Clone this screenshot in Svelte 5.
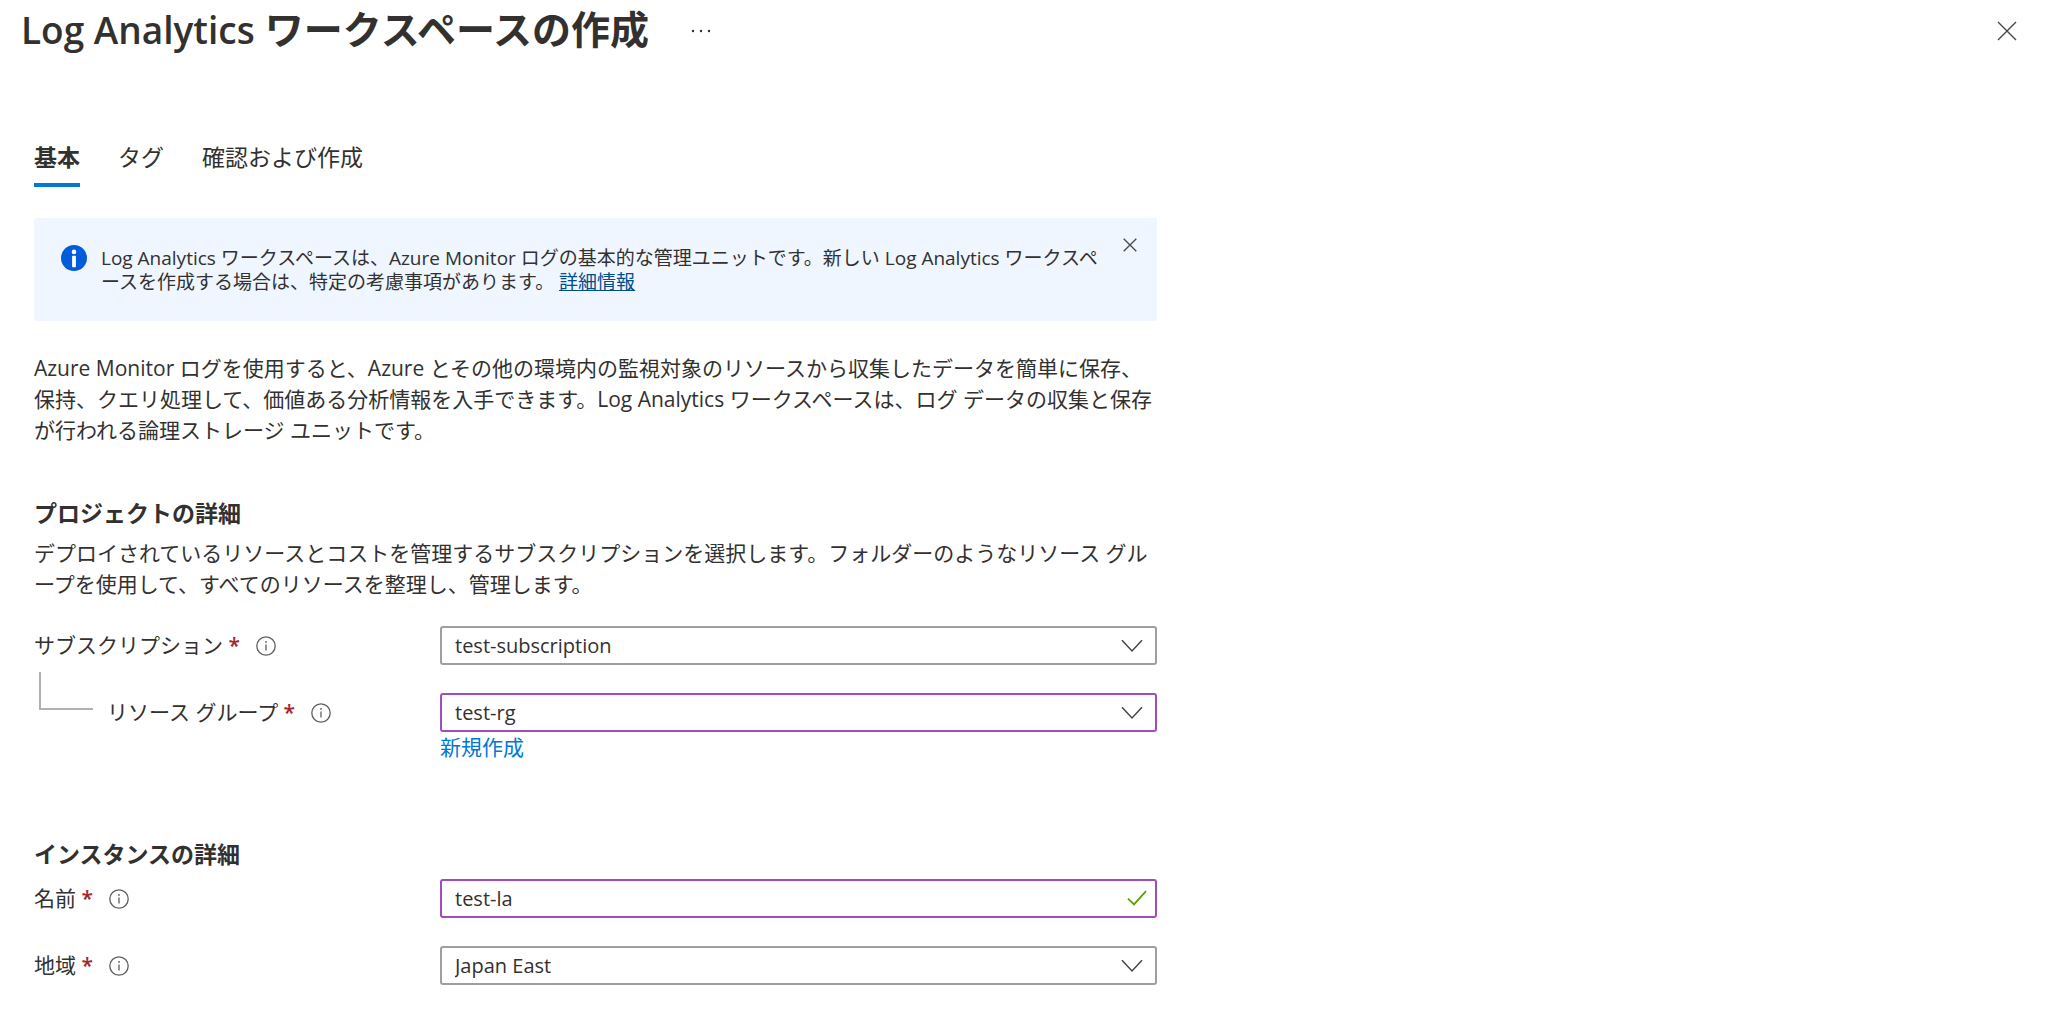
<script>
  let subscription = $state('test-subscription');
  let group = $state('test-rg');
  let name = $state('test-la');
  let region = $state('Japan East');
</script>

{#snippet hint(label)}
  <button class="hint" type="button" aria-label={label}>
    <svg viewBox="0 0 22 22" width="22" height="22" aria-hidden="true">
      <circle cx="11" cy="11" r="9.2" fill="none" stroke="#605e5c" stroke-width="1.3" />
      <path d="M11 9.4V15.4" stroke="#605e5c" stroke-width="1.3" />
      <circle cx="11" cy="6.9" r="0.95" fill="#605e5c" />
    </svg>
  </button>
{/snippet}

{#snippet chevron()}
  <svg class="chevron" viewBox="0 0 22 14" width="22" height="14" aria-hidden="true">
    <path d="M1 1.2L11 12L21 1.2" fill="none" stroke="#484644" stroke-width="1.5" />
  </svg>
{/snippet}

<div class="page" lang="ja">
  <header>
    <h1><span class="latin">Log Analytics</span> ワークスペースの作成</h1>
    <button class="icon more" type="button" aria-label="その他">
      <svg viewBox="0 0 20 6" width="20" height="6" aria-hidden="true">
        <circle cx="2" cy="3" r="1.2" /><circle cx="10" cy="3" r="1.2" /><circle cx="18" cy="3" r="1.2" />
      </svg>
    </button>
    <button class="icon close" type="button" aria-label="閉じる">
      <svg viewBox="0 0 20 20" width="20" height="20" aria-hidden="true">
        <path d="M1 1L19 19M19 1L1 19" fill="none" stroke="#484644" stroke-width="1.4" />
      </svg>
    </button>
  </header>

  <main>
    <nav>
      <button class="tab active" type="button">基本</button>
      <button class="tab" type="button">タグ</button>
      <button class="tab" type="button">確認および作成</button>
    </nav>

    <aside>
      <svg class="badge" viewBox="0 0 26 26" width="26" height="26" aria-hidden="true">
        <circle cx="13" cy="13" r="13" fill="#015cda" />
        <circle cx="13" cy="6.9" r="2.3" fill="#fff" />
        <rect x="11.1" y="10.8" width="3.8" height="11.4" rx="0.6" fill="#fff" />
      </svg>
      <p>
        Log Analytics ワークスペースは、Azure Monitor ログの基本的な管理ユニットです。新しい Log Analytics ワークスペ<wbr />ースを作成する場合は、特定の考慮事項があります。
        <a href="#details">詳細情報</a>
      </p>
      <button class="icon dismiss" type="button" aria-label="閉じる">
        <svg viewBox="0 0 14 14" width="14" height="14" aria-hidden="true">
          <path d="M0.7 0.7L13.3 13.3M13.3 0.7L0.7 13.3" fill="none" stroke="#484644" stroke-width="1.3" />
        </svg>
      </button>
    </aside>

    <p class="text intro">
      Azure Monitor ログを使用すると、Azure とその他の環境内の監視対象のリソースから収集したデータを簡単に保存、保持、クエリ処理して、価値ある分析情報を入手できます。Log Analytics ワークスペースは、ログ データの収集と保存が行われる論理ストレージ ユニットです。
    </p>

    <section>
      <h2>プロジェクトの詳細</h2>
      <p class="text">
        デプロイされているリソースとコストを管理するサブスクリプションを選択します。フォルダーのようなリソース グル<wbr />ープを使用して、すべてのリソースを整理し、管理します。
      </p>
      <div class="fields project">
        <div class="row">
          <div class="label">
            <label for="subscription">サブスクリプション <span class="req">*</span></label>
            {@render hint('サブスクリプションの情報')}
          </div>
          <div class="control">
            <select id="subscription" bind:value={subscription}>
              <option>test-subscription</option>
            </select>
            {@render chevron()}
          </div>
        </div>
        <div class="row">
          <div class="label child">
            <span class="elbow"></span>
            <label for="group">リソース グループ <span class="req">*</span></label>
            {@render hint('リソース グループの情報')}
          </div>
          <div class="control">
            <select id="group" class="edited" bind:value={group}>
              <option>test-rg</option>
            </select>
            {@render chevron()}
          </div>
          <a class="create" href="#new">新規作成</a>
        </div>
      </div>
    </section>

    <section class="instance">
      <h2>インスタンスの詳細</h2>
      <div class="fields">
        <div class="row">
          <div class="label">
            <label for="name">名前 <span class="req">*</span></label>
            {@render hint('名前の情報')}
          </div>
          <div class="control">
            <input id="name" class="edited" type="text" bind:value={name} />
            <svg class="check" viewBox="0 0 20 16" width="20" height="16" aria-hidden="true">
              <path d="M1 8.6L7 14.4L19 1.2" fill="none" stroke="#57a300" stroke-width="1.8" />
            </svg>
          </div>
        </div>
        <div class="row">
          <div class="label">
            <label for="region">地域 <span class="req">*</span></label>
            {@render hint('地域の情報')}
          </div>
          <div class="control">
            <select id="region" bind:value={region}>
              <option>Japan East</option>
            </select>
            {@render chevron()}
          </div>
        </div>
      </div>
    </section>
  </main>
</div>

<style>
  :global(body) {
    margin: 0;
    background: #fff;
  }

  .page {
    box-sizing: border-box;
    color: #323130;
    font-family: 'Open Sans', 'Noto Sans CJK JP', sans-serif;
    font-size: 20px;
    line-break: loose;
  }

  h1,
  h2,
  p {
    margin: 0;
  }

  button,
  select,
  input {
    font: inherit;
    color: inherit;
  }

  button {
    padding: 0;
    border: 0;
    background: none;
    cursor: pointer;
  }

  header {
    display: flex;
    align-items: center;
    height: 61px;
    padding: 0 31px 0 21px;
  }

  h1 {
    padding-bottom: 2px;
    font-size: 39px;
    font-weight: 600;
    line-height: 58px;
    white-space: nowrap;
  }

  .latin {
    font-size: 37px;
  }

  .icon {
    display: flex;
    fill: #323130;
  }

  .more {
    margin-left: 42px;
  }

  .close {
    margin-left: auto;
  }

  main {
    max-width: 1123px;
    padding: 79px 34px 32px;
  }

  nav {
    display: flex;
    gap: 38px;
  }

  .tab {
    padding-bottom: 9px;
    border-bottom: 4px solid transparent;
    font-size: 23px;
    line-height: 34px;
  }

  .tab.active {
    border-color: #0078d4;
    font-weight: 700;
  }

  aside {
    display: flex;
    align-items: flex-start;
    box-sizing: border-box;
    min-height: 103px;
    margin-top: 31px;
    padding: 27px 20px 27px 27px;
    border-radius: 3px;
    background: #eff6ff;
  }

  .badge {
    flex: none;
    margin-right: 14px;
  }

  aside p {
    flex: 1;
    padding-top: 1px;
    font-size: 19px;
    line-height: 24px;
  }

  aside a {
    color: #004e8c;
  }

  .dismiss {
    flex: none;
    margin: -7px 0 0 12px;
  }

  .text {
    font-size: 21px;
    line-height: 31px;
  }

  .intro {
    margin-top: 32px;
  }

  section {
    margin-top: 50px;
  }

  h2 {
    font-size: 23px;
    font-weight: 700;
    line-height: 34px;
  }

  h2 + .text {
    margin-top: 8px;
  }

  .fields {
    display: grid;
    gap: 28px;
  }

  .project {
    margin-top: 26px;
  }

  .instance {
    margin-top: 74px;
  }

  .instance .fields {
    margin-top: 8px;
  }

  .row {
    display: grid;
    grid-template-columns: 406px 1fr;
  }

  .label {
    display: flex;
    align-items: center;
    gap: 15px;
    font-size: 21px;
  }

  label {
    padding-bottom: 3px;
  }

  .req {
    color: #a4262c;
    font-weight: 600;
  }

  .hint {
    display: flex;
  }

  .child {
    position: relative;
    padding-left: 73px;
  }

  .elbow {
    position: absolute;
    left: 5px;
    bottom: 22px;
    width: 52px;
    height: 36px;
    border: solid #b3b0ad;
    border-width: 0 0 2px 2px;
  }

  .control {
    position: relative;
    height: 39px;
  }

  select,
  input {
    box-sizing: border-box;
    width: 100%;
    height: 100%;
    padding: 0 48px 0 13px;
    border: 2px solid #a19f9d;
    border-radius: 3px;
    background: #fff;
    appearance: none;
    outline: 0;
  }

  .edited {
    border-color: #a04cbc;
  }

  .chevron,
  .check {
    position: absolute;
    right: 14px;
    top: 13px;
    pointer-events: none;
  }

  .check {
    right: 10px;
    top: 11px;
  }

  .create {
    grid-column: 2;
    color: #0078d4;
    font-size: 21px;
    line-height: 31px;
    text-decoration: none;
  }
</style>
